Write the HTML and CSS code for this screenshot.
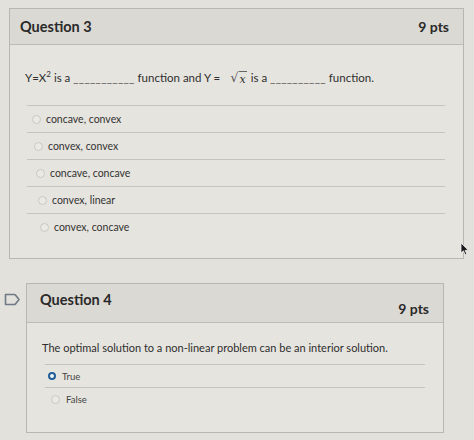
FILE: index.html
```html
<!DOCTYPE html>
<html>
<head>
<meta charset="utf-8">
<link rel="stylesheet" href="styles.css">
</head>
<body>
<div class="page">
  <section class="card card-q3">
    <header class="card-head">
      <h2 class="q-title">Question 3</h2>
      <span class="q-pts">9 pts</span>
    </header>
    <div class="card-body">
      <p class="q-text">Y=X<sup>2</sup> is a <span class="blank">___________</span> function and Y = <span class="sqrt"><span class="rad">√</span><span class="radicand">x</span></span> is a <span class="blank">__________</span> function.</p>
      <ul class="answers">
        <li class="answer a1"><span class="radio"></span>concave, convex</li>
        <li class="answer a2"><span class="radio"></span>convex, convex</li>
        <li class="answer a3"><span class="radio"></span>concave, concave</li>
        <li class="answer a4"><span class="radio"></span>convex, linear</li>
        <li class="answer a5"><span class="radio"></span>convex, concave</li>
      </ul>
    </div>
  </section>

  <div class="q4-wrap">
    <svg class="flag" width="17" height="13" viewBox="0 0 17 13"><path d="M1.5 1.5 H10 Q11 1.5 11.8 2.4 L15 6.5 L11.8 10.6 Q11 11.5 10 11.5 H1.5 Z" fill="none" stroke="#6f7a86" stroke-width="1.6" stroke-linejoin="round"/></svg>
    <section class="card card-q4">
      <header class="card-head head-q4">
        <h2 class="q-title">Question 4</h2>
        <span class="q-pts pts-low">9 pts</span>
      </header>
      <div class="card-body body-q4">
        <p class="q-text q4-text">The optimal solution to a non-linear problem can be an interior solution.</p>
        <ul class="answers answers-q4">
          <li class="answer tf t1"><span class="radio checked"></span>True</li>
          <li class="answer tf t2"><span class="radio"></span>False</li>
        </ul>
      </div>
    </section>
  </div>

  <svg class="cursor" width="10" height="14" viewBox="0 0 10 14"><path d="M1 1 L1 11 L3.4 8.8 L5.2 12.8 L6.8 12.1 L5.1 8.3 L8.4 8.3 Z" fill="#1a1a1a" stroke="#f2f2f2" stroke-width="0.8"/></svg>
</div>
</body>
</html>
```

FILE: styles.css
```css
html, body {
  margin: 0;
  padding: 0;
  background: #e3e1dc;
}
.page {
  position: relative;
  width: 474px;
  height: 440px;
  overflow: hidden;
  padding-top: 8px;
  box-sizing: border-box;
  font-family: Lato, "Open Sans", sans-serif;
  color: #2e2e2e;
}
.card {
  border: 1px solid #b9b7b1;
  background: #e6e4de;
}
.card-q3 {
  margin-left: 9px;
  width: 455px;
  height: 251px;
  box-sizing: border-box;
}
.card-head {
  display: flex;
  justify-content: space-between;
  align-items: center;
  height: 35px;
  padding: 0 14px 0 10px;
  background: #dbd9d3;
  border-bottom: 1px solid #bdbbb5;
}
.q-title {
  margin: 0;
  font-size: 14.5px;
  font-weight: 700;
  color: #2a2a2a;
}
.q-pts {
  font-size: 14px;
  font-weight: 700;
  color: #2a2a2a;
}
.card-body {
  padding: 24px 18px 0 15px;
}
.q-text {
  margin: 0 0 18px 0;
  font-size: 11.5px;
  line-height: 18px;
  color: #2e2e2e;
}
.q-text sup {
  font-size: 8px;
  line-height: 0;
  vertical-align: 5px;
}
.blank {
  letter-spacing: 0.3px;
  color: #555;
}
.sqrt {
  display: inline-flex;
  align-items: flex-start;
  margin: 0 1px 0 7px;
}
.rad {
  font-family: "DejaVu Serif", serif;
  font-size: 13px;
  line-height: 16px;
  color: #555;
}
.radicand {
  font-family: "DejaVu Serif", serif;
  font-style: italic;
  font-size: 11px;
  line-height: 15px;
  border-top: 1px solid #666;
  margin-top: 1px;
  padding: 0 1px;
}
.answers {
  list-style: none;
  margin: 0 0 0 2px;
  padding: 0;
}
.answer {
  display: flex;
  align-items: center;
  height: 26px;
  border-top: 1px solid #c6c4be;
  font-size: 10.5px;
  color: #333;
}
.a1 { padding-left: 5px; }
.a2 { padding-left: 7px; }
.a3 { padding-left: 9px; }
.a4 { padding-left: 11px; }
.a5 { padding-left: 13px; }
.radio {
  width: 7px;
  height: 7px;
  border: 1px solid #c9c8c2;
  border-radius: 50%;
  background: #ebe9e4;
  margin-right: 5px;
  flex: none;
}
.q4-wrap {
  position: relative;
  margin-top: 24px;
}
.flag {
  position: absolute;
  left: 4px;
  top: 10px;
}
.card-q4 {
  margin-left: 26px;
  width: 418px;
  height: 150px;
  box-sizing: border-box;
}
.head-q4 {
  height: 38px;
  padding: 0 14px 0 13px;
  align-items: stretch;
}
.head-q4 .q-title {
  padding-top: 7px;
}
.pts-low {
  align-self: flex-end;
  padding-bottom: 5px;
}
.body-q4 {
  padding: 16px 18px 0 15px;
}
.q4-text {
  font-size: 11px;
  margin-bottom: 7px;
}
.answers-q4 {
  margin-left: 3px;
}
.tf {
  height: 22px;
  font-size: 9.5px;
  color: #444;
}
.t1 { padding-left: 3px; }
.t2 { padding-left: 6px; }
.tf .radio { margin-right: 6px; }
.radio.checked {
  width: 4px;
  height: 4px;
  border: 2.5px solid #1f5f9a;
  background: #f4f4f4;
}
.cursor {
  position: absolute;
  left: 460px;
  top: 242px;
}
```
